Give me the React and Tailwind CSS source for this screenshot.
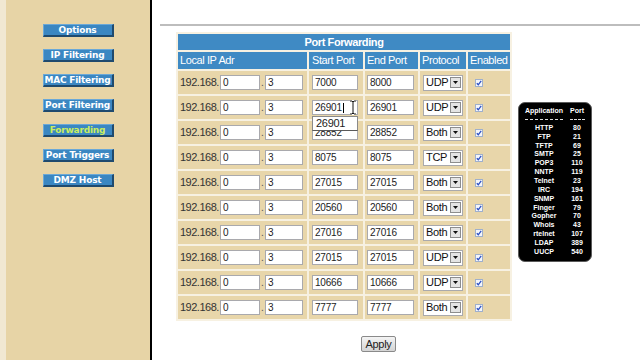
import React from "react";

const rows = [
  ["7000", "8000", "UDP"],
  ["26901", "26901", "UDP"],
  ["28852", "28852", "Both"],
  ["8075", "8075", "TCP"],
  ["27015", "27015", "Both"],
  ["20560", "20560", "Both"],
  ["27016", "27016", "Both"],
  ["27015", "27015", "UDP"],
  ["10666", "10666", "UDP"],
  ["7777", "7777", "Both"],
];

const apps = [
  ["HTTP", "80"],
  ["FTP", "21"],
  ["TFTP", "69"],
  ["SMTP", "25"],
  ["POP3", "110"],
  ["NNTP", "119"],
  ["Telnet", "23"],
  ["IRC", "194"],
  ["SNMP", "161"],
  ["Finger", "79"],
  ["Gopher", "70"],
  ["Whois", "43"],
  ["rtelnet", "107"],
  ["LDAP", "389"],
  ["UUCP", "540"],
];

const navItems = [
  "Options",
  "IP Filtering",
  "MAC Filtering",
  "Port Filtering",
  "Forwarding",
  "Port Triggers",
  "DMZ Host",
];

function Box({ value, w, caret }) {
  return (
    <div
      className={`${w} h-[15px] bg-white border border-[#a9a9ad] flex items-center pl-[2px] text-[10px] tracking-[-0.2px] text-[#222] leading-none`}
    >
      <span>{value}</span>
      {caret && <span className="ml-[1px] w-[1px] h-[10px] bg-black" />}
    </div>
  );
}

function Select({ value }) {
  return (
    <div className="w-[40px] h-[16px] bg-white border border-[#a9a9ad] flex items-center justify-between pl-[2px] pr-[1px]">
      <span className="text-[11px] tracking-[-0.3px] text-[#111] leading-none">{value}</span>
      <div className="w-[11px] h-[11px] bg-[#e4e4e4] border border-[#8d8d8d] flex items-center justify-center">
        <svg width="5" height="3" viewBox="0 0 5 3">
          <path d="M0 0 L5 0 L2.5 3 Z" fill="#111" />
        </svg>
      </div>
    </div>
  );
}

function Check() {
  return (
    <div className="w-[8px] h-[8px] bg-[#f4f6fb] border border-[#9fb0cc] flex items-center justify-center">
      <svg width="6" height="6" viewBox="0 0 6 6">
        <path d="M0.8 3.2 L2.3 4.8 L5.2 0.8" stroke="#2b4fc4" strokeWidth="1.3" fill="none" />
      </svg>
    </div>
  );
}

export default function App() {
  return (
    <div
      className="w-[640px] h-[360px] flex bg-white overflow-hidden"
      style={{ fontFamily: '"Liberation Sans", Arial, sans-serif' }}
    >
      <div className="w-[6px] bg-[#f1e8d2]" />
      <aside className="w-[144px] bg-[#e7d4a6] flex flex-col items-center pt-[24px] gap-[12px]">
        {navItems.map((n) => (
          <div
            key={n}
            className={`w-[71px] h-[13px] bg-[#3b87c2] border-b-[2px] border-r-[2px] border-b-[#1f4a6e] border-r-[#1f4a6e] border-t border-l border-t-[#6aa8d8] border-l-[#6aa8d8] flex items-center justify-center whitespace-nowrap text-[9px] font-bold leading-none tracking-[-0.2px] ${
              n === "Forwarding" ? "text-[#c9ee5e]" : "text-white"
            }`}
            style={{ fontFamily: '"DejaVu Sans", Verdana, sans-serif' }}
          >
            {n}
          </div>
        ))}
      </aside>
      <div className="w-[2px] bg-black" />
      <main className="flex-1 flex flex-col">
        <div className="ml-[8px] mt-[24px] h-[2px] bg-[#bdbdbd]" />
        <div className="flex items-start mt-[6px] ml-[24px]">
          <table className="border-separate border-spacing-[2px] bg-[#f7f1e2] table-fixed w-[336px]">
            <colgroup>
              <col className="w-[129px]" />
              <col className="w-[54px]" />
              <col className="w-[53px]" />
              <col className="w-[46px]" />
              <col className="w-[42px]" />
            </colgroup>
            <thead>
              <tr>
                <th
                  colSpan={5}
                  className="h-[16px] p-0 bg-[#3f8ac4] text-white text-[11px] font-bold tracking-[-0.4px] text-center leading-none"
                >
                  Port Forwarding
                </th>
              </tr>
              <tr className="text-white text-[11px] font-normal tracking-[-0.4px] leading-none">
                <th className="h-[17px] p-0 pl-[2px] bg-[#3f8ac4] text-left font-normal">Local IP Adr</th>
                <th className="h-[17px] p-0 pl-[3px] bg-[#3f8ac4] text-left font-normal">Start Port</th>
                <th className="h-[17px] p-0 pl-[2px] bg-[#3f8ac4] text-left font-normal">End Port</th>
                <th className="h-[17px] p-0 pl-[2px] bg-[#3f8ac4] text-left font-normal">Protocol</th>
                <th className="h-[17px] p-0 pl-[2px] bg-[#3f8ac4] text-left font-normal">Enabled</th>
              </tr>
            </thead>
            <tbody>
              {rows.map((r, i) => (
                <tr key={i} className="h-[23px]">
                  <td className="p-0 bg-[#e8d6aa]">
                    <div className="flex items-center pl-[2px] h-[23px]">
                      <span className="w-[40px] text-[11px] tracking-[-0.5px] text-[#333] leading-none">192.168.</span>
                      <Box value="0" w="w-[40px]" />
                      <span className="w-[5px] text-center text-[10px] text-[#555] leading-none">.</span>
                      <Box value="3" w="w-[38px]" />
                    </div>
                  </td>
                  <td className="p-0 bg-[#e8d6aa] relative">
                    <div className="flex items-center pl-[3px] h-[23px]">
                      <Box value={r[0]} w="w-[46px]" caret={i === 1} />
                    </div>
                    {i === 1 && (
                      <>
                        <div className="absolute left-[3px] top-[20px] w-[46px] h-[15px] bg-white border border-[#8a8a8a] border-b-[#5a5a5a] z-10 flex items-center pl-[3px] text-[11px] tracking-[-0.3px] text-[#222] leading-none">
                          26901
                        </div>
                        <svg className="absolute left-[40px] top-[4px] z-20" width="8" height="15" viewBox="0 0 8 15">
                          <path d="M1 1 H3 L4 2 L5 1 H7 M4 2 V13 M1 14 H3 L4 13 L5 14 H7" stroke="#fff" strokeWidth="2.6" fill="none" />
                          <path d="M1 1 H3 L4 2 L5 1 H7 M4 2 V13 M1 14 H3 L4 13 L5 14 H7" stroke="#111" strokeWidth="1" fill="none" />
                        </svg>
                      </>
                    )}
                  </td>
                  <td className="p-0 bg-[#e8d6aa]">
                    <div className="flex items-center pl-[2px] h-[23px]">
                      <Box value={r[1]} w="w-[47px]" />
                    </div>
                  </td>
                  <td className="p-0 bg-[#e8d6aa]">
                    <div className="flex items-center pl-[3px] h-[23px]">
                      <Select value={r[2]} />
                    </div>
                  </td>
                  <td className="p-0 bg-[#e8d6aa]">
                    <div className="flex items-center pl-[7px] h-[23px]">
                      <Check />
                    </div>
                  </td>
                </tr>
              ))}
            </tbody>
          </table>
          <div className="ml-[6px] mt-[70px] w-[74px] h-[160px] bg-black rounded-[7px] border border-[#5a5a5a] pt-[4px] pl-[3px] text-white font-bold text-[7px] leading-[8.86px]">
            <div className="grid grid-cols-[44px_22px]">
              <div className="text-center">Application</div>
              <div className="text-center">Port</div>
              <div className="mt-[3px] mx-auto w-[38px] border-t border-dashed border-[#ddd]" />
              <div className="mt-[3px] mx-auto w-[15px] border-t border-dashed border-[#ddd]" />
            </div>
            <div className="grid grid-cols-[44px_22px] mt-[4px]">
              {apps.map(([a, p]) => (
                <React.Fragment key={a}>
                  <div className="text-center">{a}</div>
                  <div className="text-center">{p}</div>
                </React.Fragment>
              ))}
            </div>
          </div>
        </div>
        <div className="ml-[209px] mt-[15px]">
          <button className="w-[35px] h-[16px] bg-gradient-to-b from-[#f4f4f4] to-[#d4d4d4] border border-[#8a8a8a] rounded-[2px] text-[11px] tracking-[-0.3px] text-[#222] leading-none flex items-center justify-center">
            Apply
          </button>
        </div>
      </main>
    </div>
  );
}
